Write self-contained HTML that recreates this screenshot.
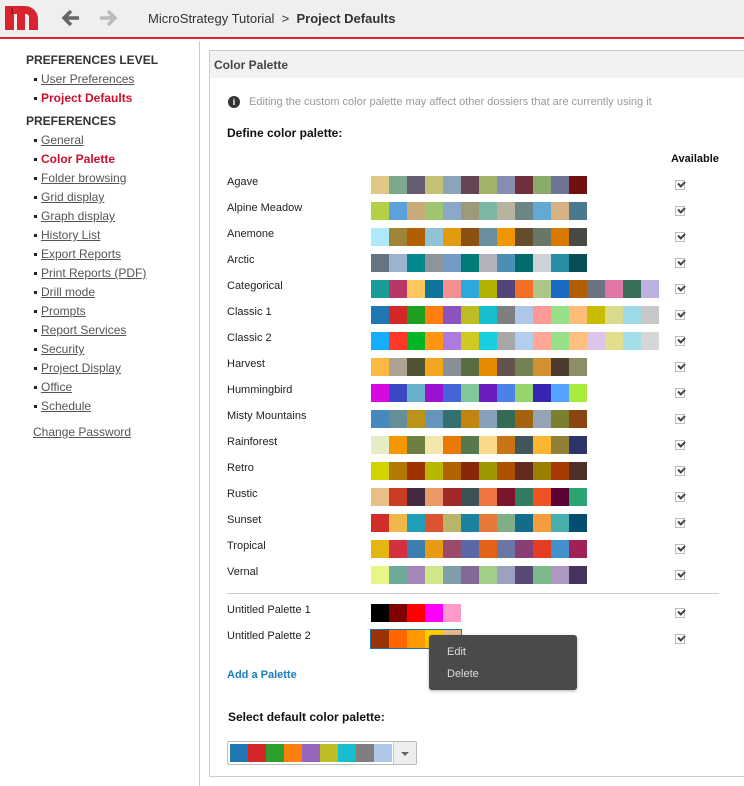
<!DOCTYPE html>
<html><head><meta charset="utf-8"><style>
*{margin:0;padding:0;box-sizing:border-box}
body{width:744px;height:786px;background:#fff;font-family:"Liberation Sans",sans-serif;position:relative;overflow:hidden;font-size:12px;color:#222}
.a{position:absolute}
.hdr{left:0;top:0;width:744px;height:39px;background:#efefef;border-bottom:2px solid #d9232e}
.nav{font-family:"Liberation Sans",sans-serif;font-size:12px;color:#555}
.nh{font-weight:bold;color:#333;font-size:12px}
.nl{text-decoration:underline;color:#555}
.nl:before,.nr:before{content:"";position:absolute;left:-7px;top:6px;width:3px;height:3px;background:#222}
.nr{color:#c8102e;font-weight:bold}
.row{left:227px;font-size:11px;color:#222}
.sw{position:absolute;height:18px;display:flex}
.sw i{width:18px;height:18px;display:block}
.cb{position:absolute;left:675px;width:10px;height:10px;border:1px solid #bbb;background:#fff}
.cb:after{content:"";position:absolute;left:2px;top:0px;width:5px;height:3px;border-left:2px solid #444;border-bottom:2px solid #444;transform:rotate(-45deg)}
</style></head><body>
<div class="a hdr"></div>
<svg class="a" style="left:5px;top:6px" width="33" height="24" viewBox="0 0 33 24"><path d="M0 0h20a13 13 0 0 1 13 13v11h-9v-13a3 3 0 0 0-3-3h-1v16h-8v-16h-3v16h-9z" fill="#d9232e"/><rect x="6" y="2" width="2" height="6" fill="#a01820"/></svg>
<svg class="a" style="left:62px;top:10px" width="18" height="16"><path d="M9 1L2 8l7 7M2 8h15" stroke="#666" stroke-width="3.5" fill="none"/></svg>
<svg class="a" style="left:99px;top:10px" width="18" height="16"><path d="M9 1l7 7-7 7M16 8H1" stroke="#bbb" stroke-width="3.5" fill="none"/></svg>
<div class="a" style="left:148px;top:11px;font-size:13px;color:#333">MicroStrategy Tutorial &nbsp;&gt;&nbsp; <b>Project Defaults</b></div>
<div class="a" style="left:199px;top:41px;width:1px;height:745px;background:#ccc"></div>
<div class="nav">
<div class="a nh" style="left:26px;top:53px">PREFERENCES LEVEL</div>
<div class="a nl" style="left:41px;top:72px">User Preferences</div>
<div class="a nr" style="left:41px;top:91px">Project Defaults</div>
<div class="a nh" style="left:26px;top:114px">PREFERENCES</div>
<div class="a nl" style="left:41px;top:133px">General</div>
<div class="a nr" style="left:41px;top:152px">Color Palette</div>
<div class="a nl" style="left:41px;top:171px">Folder browsing</div>
<div class="a nl" style="left:41px;top:190px">Grid display</div>
<div class="a nl" style="left:41px;top:209px">Graph display</div>
<div class="a nl" style="left:41px;top:228px">History List</div>
<div class="a nl" style="left:41px;top:247px">Export Reports</div>
<div class="a nl" style="left:41px;top:266px">Print Reports (PDF)</div>
<div class="a nl" style="left:41px;top:285px">Drill mode</div>
<div class="a nl" style="left:41px;top:304px">Prompts</div>
<div class="a nl" style="left:41px;top:323px">Report Services</div>
<div class="a nl" style="left:41px;top:342px">Security</div>
<div class="a nl" style="left:41px;top:361px">Project Display</div>
<div class="a nl" style="left:41px;top:380px">Office</div>
<div class="a nl" style="left:41px;top:399px">Schedule</div>
<div class="a" style="left:33px;top:425px;text-decoration:underline">Change Password</div>
</div>
<div class="a" style="left:209px;top:50px;width:540px;height:727px;border:1px solid #ccc"></div>
<div class="a" style="left:210px;top:51px;width:534px;height:27px;background:#f2f2f2"></div>
<div class="a" style="left:214px;top:58px;font-weight:bold;font-size:12px;color:#444">Color Palette</div>
<div class="a" style="left:228px;top:96px;width:12px;height:12px;border-radius:50%;background:#333;color:#fff;font-size:9px;font-weight:bold;text-align:center;line-height:12px">i</div>
<div class="a" style="left:249px;top:96px;font-size:11px;color:#999">Editing the custom color palette may affect other dossiers that are currently using it</div>
<div class="a" style="left:227px;top:126px;font-size:12px;font-weight:bold;color:#111">Define color palette:</div>
<div class="a" style="left:671px;top:153px;font-size:11px;font-weight:bold;color:#111">Available</div>
<div id="rows"></div>
<div class="a" style="left:227px;top:593px;width:492px;height:1px;background:#ccc"></div>
<div class="a row" style="top:604px">Untitled Palette 1</div>
<div class="sw" style="left:371px;top:604px"><i style="background:#000"></i><i style="background:#800000"></i><i style="background:#f00"></i><i style="background:#f0f"></i><i style="background:#f9c"></i></div>
<div class="cb" style="top:608px"></div>
<div class="a row" style="top:630px">Untitled Palette 2</div>
<div class="sw" style="left:370px;top:629px;height:20px;border:1px solid #1a73b0"><i style="background:#930"></i><i style="background:#f60"></i><i style="background:#f90"></i><i style="background:#fc0"></i><i style="background:#e8b88a"></i></div>
<div class="cb" style="top:634px"></div>
<div class="a" style="left:429px;top:635px;width:148px;height:55px;background:#4a4a4a;border-radius:3px;box-shadow:0 1px 3px rgba(0,0,0,.3)"></div>
<div class="a" style="left:447px;top:646px;color:#ddd;font-size:11px">Edit</div>
<div class="a" style="left:447px;top:668px;color:#ddd;font-size:11px">Delete</div>
<div class="a" style="left:227px;top:669px;font-size:11px;font-weight:bold;color:#1a7bbf">Add a Palette</div>
<div class="a" style="left:228px;top:710px;font-size:12px;font-weight:bold;color:#111">Select default color palette:</div>
<div class="a" style="left:227px;top:741px;width:190px;height:24px;border:1px solid #bbb;border-radius:2px"></div>
<div class="sw" style="left:230px;top:744px"><i style="background:#1f77b4"></i><i style="background:#d62728"></i><i style="background:#2ca02c"></i><i style="background:#ff7f0e"></i><i style="background:#9467bd"></i><i style="background:#bcbd22"></i><i style="background:#17becf"></i><i style="background:#7f7f7f"></i><i style="background:#aec7e8"></i></div>
<div class="a" style="left:393px;top:742px;width:23px;height:22px;background:#eee;border-left:1px solid #ccc"></div>
<div class="a" style="left:401px;top:752px;width:0;height:0;border-left:4px solid transparent;border-right:4px solid transparent;border-top:4px solid #666"></div>
<script>
var P=[["Agave","e2c887 7ca98c 645d74 c4c176 89a5b7 634553 a0b366 868eb2 6d303c 8aab69 717494 70100f"],
["Alpine Meadow","b4d045 5ca0dc c9aa7b 9fc56e 8aa9c9 9d997b 7db6a3 b8b29f 6a8686 62aad4 d5b183 4a788d"],
["Anemone","aee9fb 9f8438 b06000 8fc4d7 e09b11 8c5011 698f9f f09600 634d2d 697766 d87800 484a44"],
["Arctic","677582 9bb3cc 00888d 8d949c 729bc5 007b7a b2b3bc 4d8eb9 046b6c ced1d6 298da6 054f57"],
["Categorical","179c97 b83766 fdc95f 0d759b f68f8f 2da8dd b3b200 51457a f46f25 acc788 1b6bc2 b25d00 6a737f df76a6 386f57 bcb0e0"],
["Classic 1","1f77b4 d62728 1f9f1f ff7f0e 8c52be bcbd22 17becf 7f7f7f aec7e8 ff9896 98df8a ffbb78 c8bb00 dbdb8d 9edae5 c7c7c7"],
["Classic 2","17adfd ff3829 00b623 ff9511 ae7ade cfca23 17cfe1 a7a7a7 b3cdee ffa696 98df8a ffbf7e dbc5ec e1df8c a4dfe9 d6d6d6"],
["Harvest","fbb941 aea292 4e542f f3a51d 8a8f97 596d3f e88a00 625350 748152 d19234 4d3b2d 8b8e67"],
["Hummingbird","d808e1 3c47c3 68b1cb 9d12d0 4464d8 80c89b 6a1cc0 4d81ea 95d56b 3425b2 54a3ff a9ec3b"],
["Misty Mountains","4689bf 668e97 bc9218 6695bc 337171 c18410 87a0bb 356b53 a26210 95a4b2 7c7f2f 8a4511"],
["Rainforest","e5edc6 f59702 6e7f43 f3e6aa e97905 56784c fbd98b c87415 3f575a fbb531 908136 2d3469"],
["Retro","d1d400 b07a00 9f3200 b7b700 b16300 88280b 9b9800 ae5000 652a1f 997e00 a83905 4e302b"],
["Rustic","e8bf87 c93d24 462a41 ea9a66 a2282a 3d5157 ee7541 7b142c 327c61 f05322 590233 28a573"],
["Sunset","d22e29 f0b84b 229fb8 db5430 b8b56b 1a829e e67937 80ae87 146c8b f39b3d 47aeae 034c72"],
["Tropical","e6b610 d5303e 3c7eb0 e79a12 9c4a6b 5c67a6 e46217 6877a5 873f75 e53d24 4291cc a12056"],
["Vernal","e9f686 6ea999 a287b8 cfe68a 7e9fa9 826997 a1cf88 9da1bf 5b4975 7db98b ae98c3 46345f"]];
var h="";P.forEach(function(p,k){var y=176+26*k;h+='<div class="a row" style="top:'+(y)+'px">'+p[0]+'</div><div class="sw" style="left:371px;top:'+y+'px">';p[1].split(" ").forEach(function(c){h+='<i style="background:#'+c+'"></i>'});h+='</div><div class="cb" style="top:'+(y+4)+'px"></div>'});
document.getElementById("rows").innerHTML=h;
</script>
</body></html>
